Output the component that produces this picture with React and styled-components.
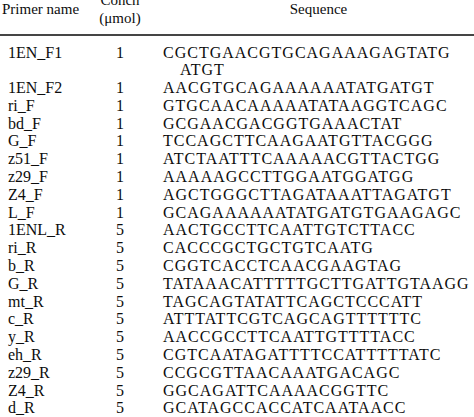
import React from 'react';
import styled, { createGlobalStyle } from 'styled-components';

const primers = [
  { name: '1EN_F1', concn: 1, seq: ['CGCTGAACGTGCAGAAAGAGTATG', 'ATGT'] },
  { name: '1EN_F2', concn: 1, seq: ['AACGTGCAGAAAAAATATGATGT'] },
  { name: 'ri_F', concn: 1, seq: ['GTGCAACAAAAATATAAGGTCAGC'] },
  { name: 'bd_F', concn: 1, seq: ['GCGAACGACGGTGAAACTAT'] },
  { name: 'G_F', concn: 1, seq: ['TCCAGCTTCAAGAATGTTACGGG'] },
  { name: 'z51_F', concn: 1, seq: ['ATCTAATTTCAAAAACGTTACTGG'] },
  { name: 'z29_F', concn: 1, seq: ['AAAAAGCCTTGGAATGGATGG'] },
  { name: 'Z4_F', concn: 1, seq: ['AGCTGGGCTTAGATAAATTAGATGT'] },
  { name: 'L_F', concn: 1, seq: ['GCAGAAAAAATATGATGTGAAGAGC'] },
  { name: '1ENL_R', concn: 5, seq: ['AACTGCCTTCAATTGTCTTACC'] },
  { name: 'ri_R', concn: 5, seq: ['CACCCGCTGCTGTCAATG'] },
  { name: 'b_R', concn: 5, seq: ['CGGTCACCTCAACGAAGTAG'] },
  { name: 'G_R', concn: 5, seq: ['TATAAACATTTTTGCTTGATTGTAAGG'] },
  { name: 'mt_R', concn: 5, seq: ['TAGCAGTATATTCAGCTCCCATT'] },
  { name: 'c_R', concn: 5, seq: ['ATTTATTCGTCAGCAGTTTTTTC'] },
  { name: 'y_R', concn: 5, seq: ['AACCGCCTTCAATTGTTTTACC'] },
  { name: 'eh_R', concn: 5, seq: ['CGTCAATAGATTTTCCATTTTTATC'] },
  { name: 'z29_R', concn: 5, seq: ['CCGCGTTAACAAATGACAGC'] },
  { name: 'Z4_R', concn: 5, seq: ['GGCAGATTCAAAACGGTTC'] },
  { name: 'd_R', concn: 5, seq: ['GCATAGCCACCATCAATAACC'] },
];

const serif = '"Liberation Serif", "Times New Roman", serif';

const GlobalStyle = createGlobalStyle`
  html, body {
    margin: 0;
    padding: 0;
    background: #ffffff;
    overflow: hidden;
    font-family: ${serif};
  }
`;

const Table = styled.table`
  width: 474px;
  margin-top: -9px;
  border-collapse: collapse;
  table-layout: fixed;
  font-family: ${serif};
  color: #0d0d0d;
`;

const HeadCell = styled.th`
  font-family: ${serif};
  font-weight: normal;
  font-size: 15px;
  line-height: 18px;
  vertical-align: middle;
  padding: 0 0 7px ${props => props.$indent || 0}px;
  text-align: ${props => props.$align || 'center'};
  border-bottom: 2px solid #454545;
  white-space: nowrap;
`;

const Cell = styled.td`
  font-family: ${serif};
  font-size: 16px;
  line-height: 17.8px;
  vertical-align: top;
  padding: ${props => (props.$first ? 7.5 : 0)}px 0 0 ${props => props.$indent || 0}px;
  text-align: ${props => props.$align || 'left'};
  white-space: nowrap;
`;

const Seq = styled.span`
  display: block;
  letter-spacing: 1px;
  padding-left: ${props => (props.$cont ? 17 : 0)}px;
`;

const App = () => {
  return (
    <>
      <GlobalStyle />
      <Table>
        <colgroup>
          <col style={{ width: 96 }} />
          <col style={{ width: 48 }} />
          <col />
        </colgroup>
        <thead>
          <tr>
            <HeadCell $align="left" $indent={2}>Primer name</HeadCell>
            <HeadCell>Concn<br />(μmol)</HeadCell>
            <HeadCell $indent={19}>Sequence</HeadCell>
          </tr>
        </thead>
        <tbody>
          {primers.map((p, i) => (
            <tr key={p.name}>
              <Cell $first={i === 0} $indent={8}>{p.name}</Cell>
              <Cell $first={i === 0} $align="center">{p.concn}</Cell>
              <Cell $first={i === 0} $indent={19}>
                {p.seq.map((s, j) => (
                  <Seq key={s} $cont={j > 0}>{s}</Seq>
                ))}
              </Cell>
            </tr>
          ))}
        </tbody>
      </Table>
    </>
  );
};

export default App;
